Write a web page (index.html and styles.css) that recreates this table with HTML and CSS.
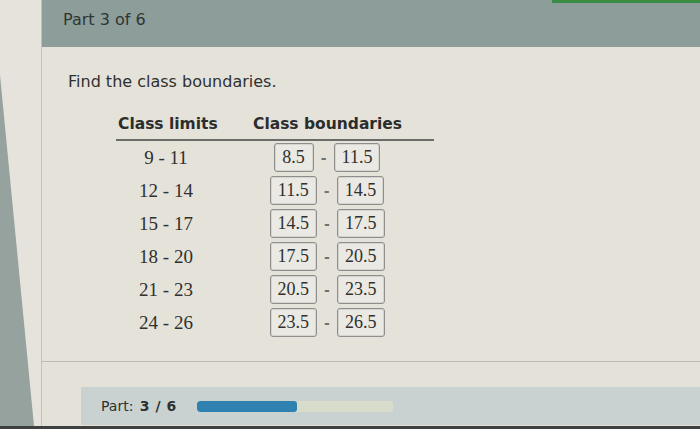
FILE: index.html
```html
<!DOCTYPE html>
<html>
<head>
<meta charset="utf-8">
<link rel="stylesheet" href="styles.css">
</head>
<body>
<div class="screen">
  <div class="side"><div class="shade"></div></div>
  <div class="main">
    <header class="topbar">
      <div class="accent"></div>
      <div class="part-title">Part 3 of 6</div>
    </header>
    <section class="panel">
      <p class="prompt">Find the class boundaries.</p>
      <div class="table">
        <div class="th th-limits">Class limits</div>
        <div class="th th-bounds">Class boundaries</div>

        <div class="td limits">9 - 11</div>
        <div class="td bounds"><span class="box">8.5</span><span class="dash">-</span><span class="box">11.5</span></div>

        <div class="td limits">12 - 14</div>
        <div class="td bounds"><span class="box">11.5</span><span class="dash">-</span><span class="box">14.5</span></div>

        <div class="td limits">15 - 17</div>
        <div class="td bounds"><span class="box">14.5</span><span class="dash">-</span><span class="box">17.5</span></div>

        <div class="td limits">18 - 20</div>
        <div class="td bounds"><span class="box">17.5</span><span class="dash">-</span><span class="box">20.5</span></div>

        <div class="td limits">21 - 23</div>
        <div class="td bounds"><span class="box">20.5</span><span class="dash">-</span><span class="box">23.5</span></div>

        <div class="td limits">24 - 26</div>
        <div class="td bounds"><span class="box">23.5</span><span class="dash">-</span><span class="box">26.5</span></div>
      </div>
    </section>
    <footer class="footer">
      <span class="part-label">Part: <b>3 / 6</b></span>
      <div class="progress"><div class="progress-fill"></div></div>
    </footer>
  </div>
</div>
<div class="bottom-edge"></div>
</body>
</html>
```

FILE: styles.css
```css
html, body {
  margin: 0;
  padding: 0;
}
body {
  width: 700px;
  height: 429px;
  overflow: hidden;
  background: #e4e1d9;
  font-family: "DejaVu Sans", Verdana, sans-serif;
  color: #333735;
}
.screen {
  display: flex;
  height: 426px;
}
.side {
  width: 41px;
  flex: none;
  background: #e6e3dc;
  border-right: 1px solid #c4c1b9;
}
.shade {
  height: 100%;
  background: #96a29d;
  clip-path: polygon(0 75px, 34px 100%, 0 100%);
}
.main {
  flex: 1;
  display: flex;
  flex-direction: column;
}
.topbar {
  height: 47px;
  background: #8d9d99;
  display: flex;
  flex-direction: column;
}
.accent {
  height: 3px;
  margin-left: 510px;
  background: #3a8c45;
}
.part-title {
  font-size: 16px;
  padding: 7px 0 0 21px;
  color: #2f3634;
}
.panel {
  height: 314px;
  padding-left: 26px;
  border-bottom: 1px solid #bdbab2;
  background: #e5e2da;
}
.prompt {
  margin: 25px 0 0;
  font-size: 16px;
  line-height: 19px;
  color: #2e302f;
}
.table {
  margin: 21px 0 0 48px;
  display: grid;
  grid-template-columns: 120px 198px;
  grid-template-rows: 29px;
  grid-auto-rows: 33px;
}
.th {
  font-weight: bold;
  font-size: 15.5px;
  line-height: 24px;
  border-bottom: 2px solid #6b6b68;
  color: #2b2d2c;
}
.th-limits {
  padding-left: 2px;
}
.th-bounds {
  padding-left: 17px;
}
.td {
  font-family: "Liberation Serif", "Times New Roman", serif;
  font-size: 19px;
  color: #2f302f;
  display: flex;
  align-items: center;
}
.limits {
  justify-content: center;
  padding-right: 20px;
}
.bounds {
  justify-content: center;
  padding-right: 16px;
}
.box {
  height: 27px;
  line-height: 27px;
  padding: 0 7px;
  min-width: 24px;
  text-align: center;
  font-size: 18px;
  border: 1px solid #8e8f8c;
  border-radius: 3px;
  background: #ebe9e3;
  box-shadow: inset 0 0 0 1px #d6d4ce;
}
.dash {
  width: 20px;
  text-align: center;
  color: #6f7172;
  font-family: "DejaVu Sans", sans-serif;
  font-size: 14px;
  font-weight: bold;
}
.footer {
  margin: 25px 0 0 39px;
  height: 38px;
  background: #c9d2d0;
  display: flex;
  align-items: center;
  padding-left: 20px;
  gap: 21px;
}
.part-label {
  font-size: 14px;
  color: #2d3130;
}
.part-label b {
  margin-left: 2px;
  word-spacing: 1px;
}
.progress {
  width: 196px;
  height: 11px;
  border-radius: 3px;
  background: #d7dccb;
  overflow: hidden;
}
.progress-fill {
  width: 100px;
  height: 100%;
  background: #2f82b0;
  border-radius: 3px;
}
.bottom-edge {
  height: 3px;
  background: #3d403f;
}
```
